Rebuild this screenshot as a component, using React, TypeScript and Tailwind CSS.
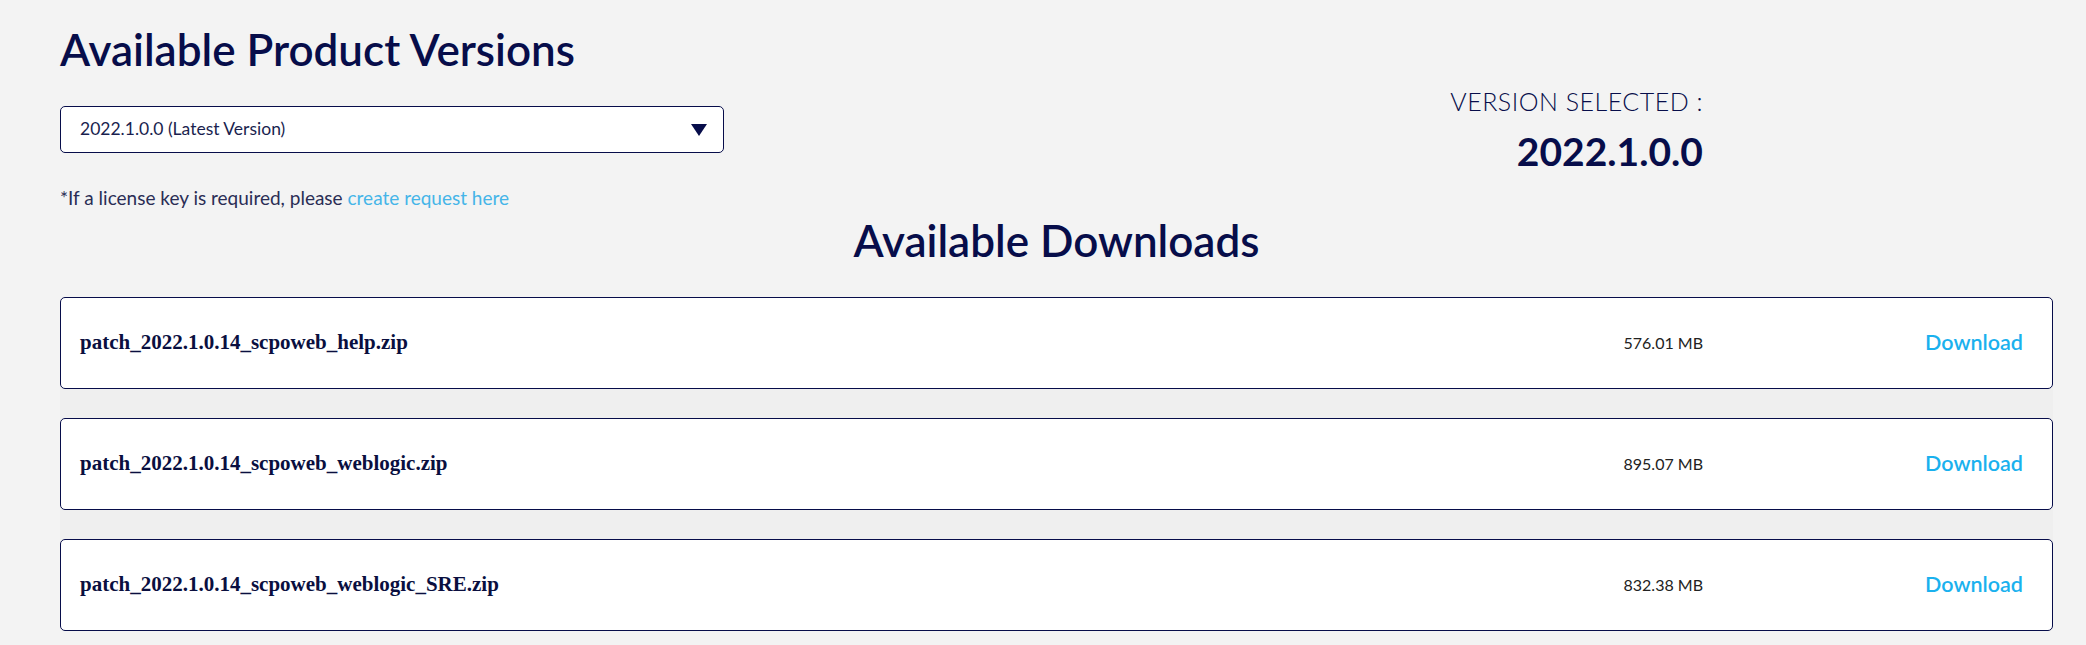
const files = [
  { name: "patch_2022.1.0.14_scpoweb_help.zip", size: "576.01 MB" },
  { name: "patch_2022.1.0.14_scpoweb_weblogic.zip", size: "895.07 MB" },
  { name: "patch_2022.1.0.14_scpoweb_weblogic_SRE.zip", size: "832.38 MB" },
];

export default function App() {
  return (
    <div className="min-h-screen bg-[#f3f3f3] text-[#070d4a] font-['Lato',sans-serif]">
      <div className="pl-[60px] pr-[33px] pt-[22px]">
        {/* Versions */}
        <div className="flex justify-between pr-[350px]">
          <div className="w-[664px]">
            <h1 className="text-[44px] leading-[54px] font-semibold">Available Product Versions</h1>
            <div className="mt-[30px] h-[47px] bg-white border border-[#070d4a] rounded-[5px] flex items-center justify-between pl-[19px] pr-[16px]">
              <span className="text-[17.5px] text-[#1a1f4f]">2022.1.0.0 (Latest Version)</span>
              <svg width="16" height="12" viewBox="0 0 16 12">
                <path d="M0 0 H16 L8 12 Z" fill="#070d4a" />
              </svg>
            </div>
            <p className="mt-[31px] text-[19px] text-[#2a2d55]">
              *If a license key is required, please{" "}
              <a href="#" className="text-[#45b5e8]">create request here</a>
            </p>
          </div>
          <div className="pt-[64px] text-right">
            <div className="text-[25px] font-light leading-[30px] tracking-[0.5px]">VERSION SELECTED :</div>
            <div className="mt-[13px] text-[39px] font-bold leading-[44px]">2022.1.0.0</div>
          </div>
        </div>

        {/* Downloads */}
        <h2 className="text-center text-[44px] leading-[54px] font-semibold">Available Downloads</h2>
        <div className="mt-[30px] bg-[#efefef] rounded-[6px] flex flex-col gap-[29px]">
          {files.map((f) => (
            <div
              key={f.name}
              className="h-[92px] bg-white border border-[#070d4a] rounded-[5px] flex items-center pl-[19px] pr-[29px]"
            >
              <span className="flex-1 font-['Liberation_Serif',serif] font-bold text-[21px] text-[#0a0f3f]">{f.name}</span>
              <span className="text-[16px] text-[#222]">{f.size}</span>
              <span className="w-[320px] text-right text-[21.5px] font-semibold text-[#1ab1ee]">Download</span>
            </div>
          ))}
        </div>
      </div>
    </div>
  );
}
